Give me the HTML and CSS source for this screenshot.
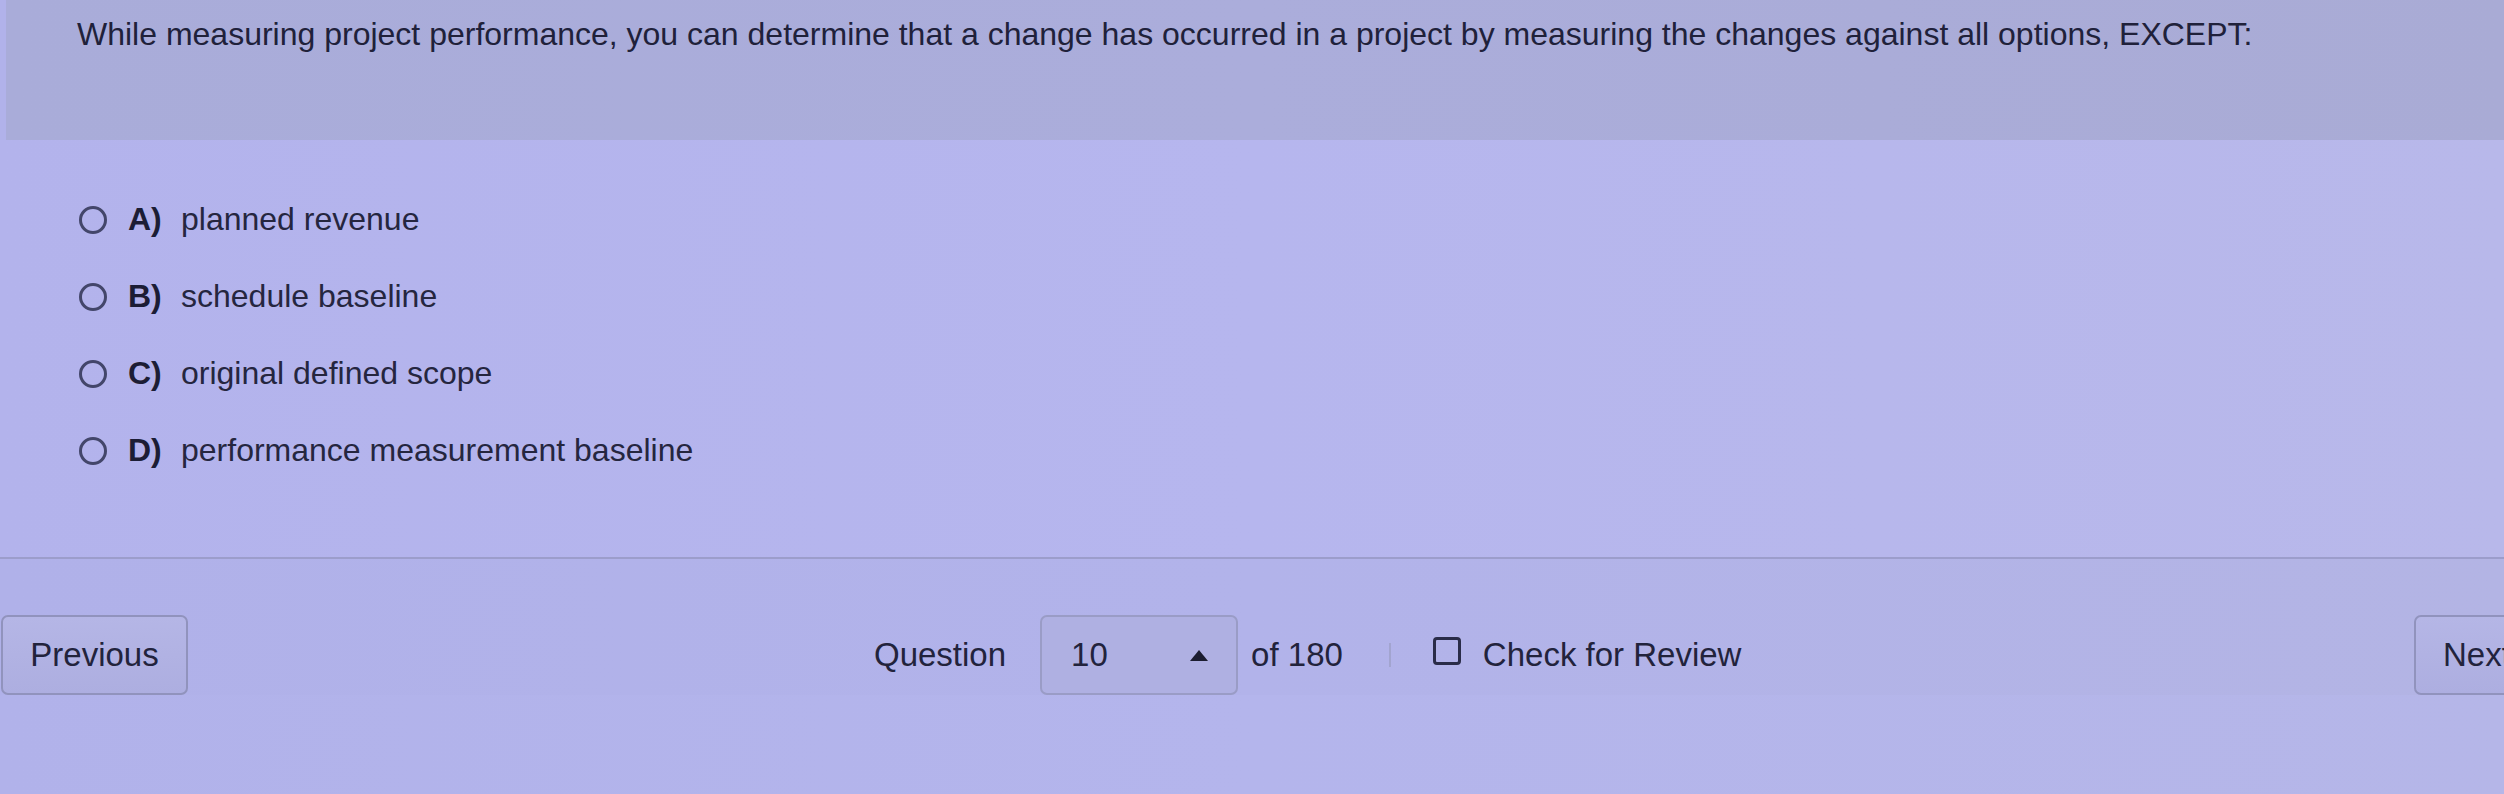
FILE: index.html
```html
<!DOCTYPE html>
<html>
<head>
<meta charset="utf-8">
<link rel="stylesheet" href="styles.css">
</head>
<body>
<div class="page">
  <div class="header">
    <p class="question">While measuring project performance, you can determine that a change has occurred in a project by measuring the changes against all options, EXCEPT:</p>
  </div>
  <div class="options">
    <label class="option"><span class="radio"></span><span class="letter">A)</span><span class="text">planned revenue</span></label>
    <label class="option"><span class="radio"></span><span class="letter">B)</span><span class="text">schedule baseline</span></label>
    <label class="option"><span class="radio"></span><span class="letter">C)</span><span class="text">original defined scope</span></label>
    <label class="option"><span class="radio"></span><span class="letter">D)</span><span class="text">performance measurement baseline</span></label>
  </div>
  <div class="divider"></div>
  <div class="footer">
    <button class="btn prev">Previous</button>
    <div class="nav">
      <span class="nav-label">Question</span>
      <div class="select"><span class="select-value">10</span><span class="caret"></span></div>
      <span class="nav-of">of 180</span>
      <span class="sep"></span>
      <span class="checkbox"></span>
      <span class="review">Check for Review</span>
    </div>
    <button class="btn next">Next</button>
  </div>
</div>
</body>
</html>
```

FILE: styles.css
```css
html, body {
  margin: 0;
  padding: 0;
  height: 100%;
  overflow: hidden;
}
body {
  background: #b2b3ea;
  font-family: "Liberation Sans", Arial, sans-serif;
  color: #25263f;
}
.page {
  display: flex;
  flex-direction: column;
  width: 2504px;
  height: 794px;
  background: linear-gradient(90deg, #b1b2ea 0%, #b4b5ec 50%, #b5b6e8 100%);
}
.header {
  height: 140px;
  margin-left: 6px;
  padding-left: 71px;
  box-sizing: border-box;
  background: linear-gradient(90deg, #a9acd9 0%, #abaddb 50%, #a9abd5 100%);
}
.question {
  margin: 0;
  padding-top: 14px;
  font-size: 32px;
  line-height: 40px;
  color: #20213a;
  white-space: nowrap;
}
.options {
  display: flex;
  flex-direction: column;
  padding: 41px 0 68px 79px;
  background: linear-gradient(90deg, #b3b3ec 0%, #b6b6ee 50%, #b8b8ea 100%);
}
.option {
  display: flex;
  align-items: center;
  height: 77px;
  font-size: 32px;
}
.radio {
  width: 22px;
  height: 22px;
  border: 3px solid #43466a;
  border-radius: 50%;
  flex: none;
}
.letter {
  font-weight: bold;
  margin-left: 21px;
  width: 53px;
  color: #1c1d35;
}
.text {
  color: #25263f;
}
.divider {
  height: 2px;
  background: #9c9dcb;
}
.footer {
  display: flex;
  align-items: center;
  padding-top: 56px;
  height: 80px;
  background: linear-gradient(90deg, #b0b1e9 0%, #b2b3ea 50%, #b3b4e4 100%);
}
.btn {
  font-family: "Liberation Sans", Arial, sans-serif;
  font-size: 33px;
  color: #22233c;
  height: 80px;
  box-sizing: border-box;
  border: 2px solid #9193bd;
  border-radius: 7px;
  background: linear-gradient(180deg, #b5b6e6 0%, #adaee0 100%);
  padding: 0 27px;
  flex: none;
}
.prev {
  margin-left: 1px;
  width: 187px;
}
.next {
  margin-left: auto;
  margin-right: -40px;
  width: 130px;
  text-align: left;
}
.nav {
  display: flex;
  align-items: center;
  margin-left: 686px;
  font-size: 33px;
  color: #22233c;
}
.select {
  display: flex;
  align-items: center;
  justify-content: space-between;
  width: 198px;
  height: 80px;
  box-sizing: border-box;
  margin-left: 34px;
  padding: 0 28px 0 29px;
  border: 2px solid #9a9cc6;
  border-radius: 7px;
  background: #afb0e2;
}
.caret {
  width: 0;
  height: 0;
  border-left: 9px solid transparent;
  border-right: 9px solid transparent;
  border-bottom: 11px solid #1c1d30;
}
.nav-of {
  margin-left: 13px;
}
.sep {
  width: 2px;
  height: 24px;
  background: #a2a4cf;
  margin-left: 46px;
}
.checkbox {
  width: 22px;
  height: 22px;
  border: 3px solid #2a2c48;
  border-radius: 4px;
  margin-left: 42px;
  margin-top: -8px;
}
.review {
  margin-left: 22px;
}
```
